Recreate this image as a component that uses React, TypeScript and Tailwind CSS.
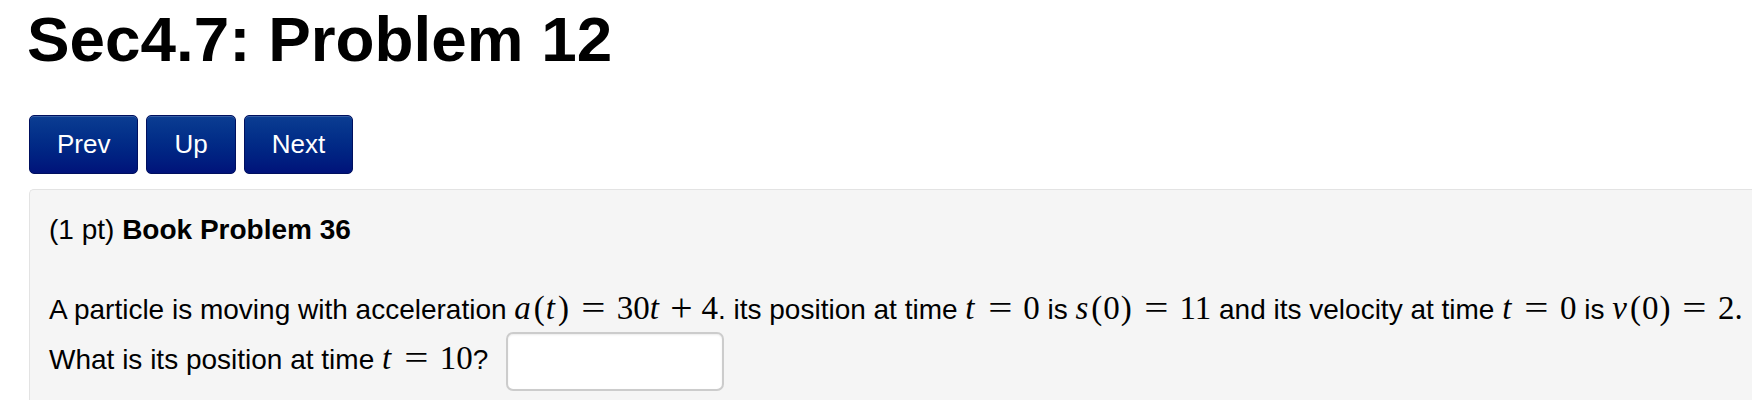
import type { ReactNode } from "react";

const nav = ["Prev", "Up", "Next"];

// MathJax-ish inline math: serif, slightly larger than the body text
function M({ children }: { children: ReactNode }) {
  return <span className="font-['Liberation_Serif','Times_New_Roman',serif] text-[33px] leading-none">{children}</span>;
}

function V({ children }: { children: ReactNode }) {
  return <i className="pr-[2px]">{children}</i>;
}

function P({ children }: { children: ReactNode }) {
  return <span className="px-[1px]">{children}</span>;
}

function Eq() {
  return <span className="mx-[14px] inline-block scale-x-[1.3]">=</span>;
}

function Plus() {
  return <span className="mx-[11px] inline-block scale-[1.2]">+</span>;
}

export default function App() {
  return (
    <div className="flex min-h-[400px] flex-col bg-white pl-[29px] font-['Liberation_Sans',Arial,sans-serif] text-black">
      <h1 className="-ml-[2px] pt-[8px] text-[63.8px] font-bold leading-none">Sec4.7: Problem 12</h1>

      <div className="mt-[43px] flex gap-[8px]">
        {nav.map((label) => (
          <button
            key={label}
            type="button"
            className="h-[59px] rounded-[5px] border border-[#00105f] bg-linear-to-b from-[#0c3d92] to-[#00127a] px-[27px] text-[26px] leading-none text-white shadow-[inset_0_1px_0_rgba(255,255,255,0.18)]"
          >
            {label}
          </button>
        ))}
      </div>

      <div className="mt-[15px] flex-1 rounded-tl-[5px] border-t border-l border-[#e3e3e3] bg-[#f5f5f5] pt-[20px] pl-[19px] text-[28px] leading-[40px]">
        <div>
          (1 pt) <b>Book Problem 36</b>
        </div>

        <div className="mt-[40px] whitespace-nowrap">
          A particle is moving with acceleration{" "}
          <M>
            <V>a</V>
            <P>(</P>
            <V>t</V>
            <P>)</P>
            <Eq />
            30<V>t</V>
            <Plus />4
          </M>
          . its position at time{" "}
          <M>
            <V>t</V>
            <Eq />0
          </M>{" "}
          is{" "}
          <M>
            <V>s</V>
            <P>(</P>0<P>)</P>
            <Eq />
            11
          </M>{" "}
          and its velocity at time{" "}
          <M>
            <V>t</V>
            <Eq />0
          </M>{" "}
          is{" "}
          <M>
            <V>v</V>
            <P>(</P>0<P>)</P>
            <Eq />
            2.
          </M>
        </div>

        <div className="mt-[2px] whitespace-nowrap">
          What is its position at time{" "}
          <M>
            <V>t</V>
            <Eq />
            10
          </M>
          ?
          <input
            type="text"
            className="ml-[18px] h-[59px] w-[218px] rounded-[7px] border-2 border-[#cccccc] bg-white align-middle shadow-[inset_0_1px_2px_rgba(0,0,0,0.08)] outline-none"
          />
        </div>
      </div>
    </div>
  );
}
